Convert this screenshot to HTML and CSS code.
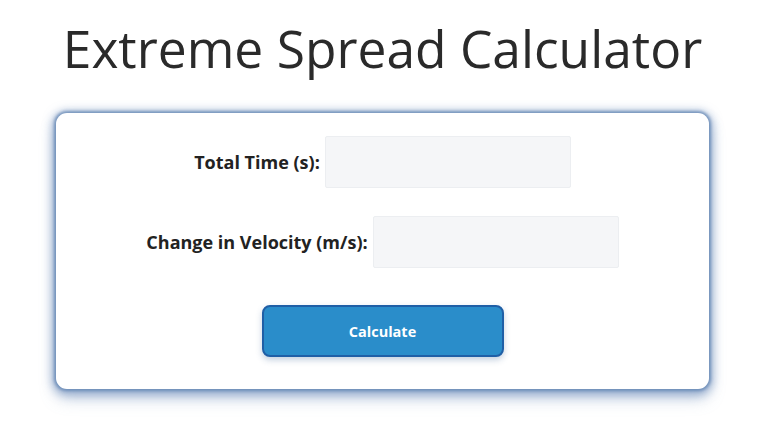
FILE: index.html
```html
<!DOCTYPE html>
<html>
<head>
<meta charset="utf-8">
<link rel="stylesheet" href="styles.css">
</head>
<body>
<h1 class="title">Extreme Spread Calculator</h1>
<div class="card">
  <div class="row">
    <label class="label" for="t">Total Time (s):</label>
    <input class="field" id="t" type="text">
  </div>
  <div class="row">
    <label class="label" for="v">Change in Velocity (m/s):</label>
    <input class="field" id="v" type="text">
  </div>
  <div class="row row-btn">
    <button class="btn">Calculate</button>
  </div>
</div>
</body>
</html>
```
FILE: styles.css
```css
html, body {
  margin: 0;
  padding: 0;
  background: #ffffff;
}
body {
  font-family: "Open Sans", "Noto Sans", sans-serif;
  color: #222222;
  min-height: 433px;
  padding-bottom: 30px;
  box-sizing: border-box;
}
.title {
  margin: 14px 0 0 0;
  padding-right: 3px;
  text-align: center;
  font-weight: 400;
  font-size: 51.5px;
  line-height: 68px;
  color: #2a2a2a;
}
.card {
  width: 653px;
  box-sizing: border-box;
  margin: 31px 0 0 56px;
  background: #ffffff;
  border-radius: 11px;
  box-shadow: 0 0 3px 2px rgba(100, 135, 180, 0.8), 0 2px 10px 4px rgba(95, 130, 180, 0.55), 0 10px 16px rgba(120, 150, 190, 0.35);
  padding: 23px 0 32px 0;
  display: flex;
  flex-direction: column;
  align-items: center;
  gap: 28px;
}
.row {
  display: flex;
  align-items: center;
  justify-content: center;
  gap: 5px;
}
.row-btn {
  margin-top: 9px;
}
.label {
  font-weight: 700;
  font-size: 18px;
  color: #222222;
}
.field {
  width: 246px;
  height: 52px;
  box-sizing: border-box;
  background: #f5f6f8;
  border: 1px solid #eceef1;
  border-radius: 2px;
  margin: 0;
}
.btn {
  width: 242px;
  height: 52px;
  box-sizing: border-box;
  background: #2a8dca;
  border: 2px solid #1f5fa6;
  border-radius: 8px;
  color: #ffffff;
  font-family: "Open Sans", "Noto Sans", sans-serif;
  font-weight: 700;
  font-size: 14.5px;
  box-shadow: 0 3px 6px rgba(60, 100, 150, 0.3);
}
```
